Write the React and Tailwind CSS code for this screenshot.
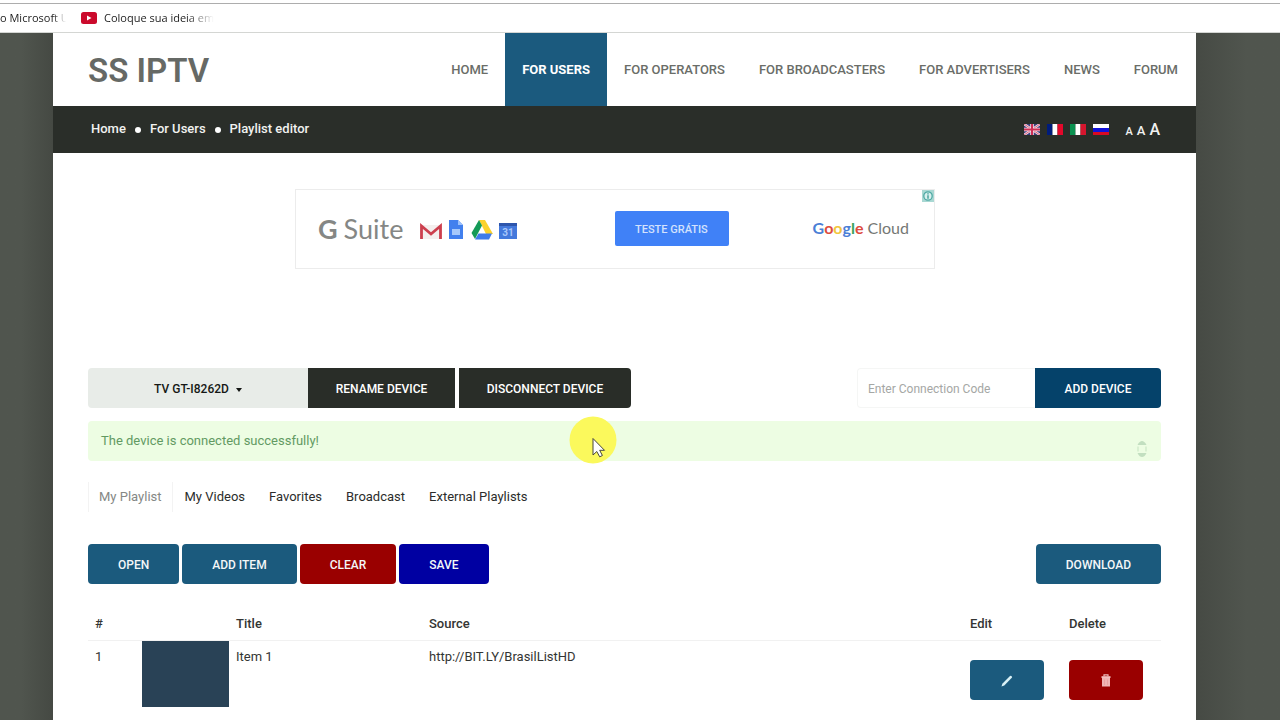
import React from "react";

const navItems = [
  { label: "HOME" },
  { label: "FOR USERS", active: true },
  { label: "FOR OPERATORS" },
  { label: "FOR BROADCASTERS" },
  { label: "FOR ADVERTISERS" },
  { label: "NEWS" },
  { label: "FORUM" },
];

const tabs = ["My Playlist", "My Videos", "Favorites", "Broadcast", "External Playlists"];

const items = [{ id: 1, title: "Item 1", source: "http://BIT.LY/BrasilListHD" }];

function BookmarksBar() {
  return (
    <div className="flex h-[33px] shrink-0 flex-col border-b border-[#d4d6d3] bg-white pt-[3px]">
      <div className="flex flex-1 items-center border-t border-[#adadad] font-['Open_Sans','Noto_Sans',sans-serif] text-[11px] whitespace-nowrap">
        <a href="#microsoft" className="w-[66px] bg-linear-to-r from-[#1c1c1c] from-80% to-transparent bg-clip-text text-transparent">
          o Microsoft U
        </a>
        <a href="#video" className="ml-[15px] flex items-center gap-[7px]">
          <svg viewBox="0 0 16 12" className="h-3 w-4" aria-hidden="true">
            <rect width="16" height="12" rx="2.5" fill="#cb0a2c" />
            <path d="M6 3.500v5l4.500-2.500z" fill="#fff" />
          </svg>
          <span className="bg-linear-to-r from-[#1c1c1c] from-75% to-transparent bg-clip-text text-transparent">
            Coloque sua ideia em
          </span>
        </a>
      </div>
    </div>
  );
}

function Header() {
  return (
    <header className="flex h-[73px] items-stretch justify-between">
      <a href="#top" className="flex items-center pt-[2px] pl-[35px] text-[33px] font-semibold text-[#666965]">
        SS IPTV
      </a>
      <nav className="flex pr-[1px] text-[13px] font-medium">
        {navItems.map((item) => (
          <a
            key={item.label}
            href="#nav"
            className={
              item.active
                ? "flex items-center bg-[#1b5a7e] px-[17px] font-bold text-white"
                : "flex items-center px-[17px] text-[#6a6d68]"
            }
          >
            {item.label}
          </a>
        ))}
      </nav>
    </header>
  );
}

function Flag({ name, children }) {
  return (
    <a href="#lang" aria-label={name}>
      <svg viewBox="0 0 16 11" className="h-[11px] w-4">
        {children}
      </svg>
    </a>
  );
}

function Breadcrumbs() {
  return (
    <div className="flex h-[47px] items-center justify-between bg-[#2a2e29] pr-9 pl-[38px] text-[13px] font-medium text-[#f1f2f0]">
      <nav aria-label="Breadcrumb" className="flex items-center gap-[9px] pb-[2px]">
        <a href="#home">Home</a>
        <span className="mt-[2px] size-[6px] rounded-full bg-white" />
        <a href="#users">For Users</a>
        <span className="mt-[2px] size-[6px] rounded-full bg-white" />
        <a href="#editor">Playlist editor</a>
      </nav>
      <div className="flex items-center">
        <div className="flex items-center gap-[7px]">
          <Flag name="English">
            <rect width="16" height="11" fill="#3c3f7c" />
            <path d="M0 0l16 11M16 0L0 11" stroke="#f3dbe4" strokeWidth="2.400" />
            <path d="M0 0l16 11M16 0L0 11" stroke="#d0415f" strokeWidth="0.800" />
            <path d="M8 0v11M0 5.500h16" stroke="#f3dbe4" strokeWidth="3.600" />
            <path d="M8 0v11M0 5.500h16" stroke="#cf2f55" strokeWidth="2" />
          </Flag>
          <Flag name="Français">
            <rect width="5.500" height="11" fill="#001c7c" />
            <rect x="5.500" width="5" height="11" fill="#fff" />
            <rect x="10.500" width="5.500" height="11" fill="#e5082b" />
          </Flag>
          <Flag name="Italiano">
            <rect width="5.500" height="11" fill="#0b9150" />
            <rect x="5.500" width="5" height="11" fill="#fff" />
            <rect x="10.500" width="5.500" height="11" fill="#d6162e" />
          </Flag>
          <Flag name="Русский">
            <rect width="16" height="4" fill="#fff" />
            <rect y="4" width="16" height="4" fill="#1010d8" />
            <rect y="8" width="16" height="3" fill="#d80a22" />
          </Flag>
        </div>
        <div className="ml-4 flex items-baseline gap-1">
          <button type="button" aria-label="Small text" className="text-[11px]">A</button>
          <button type="button" aria-label="Medium text" className="text-[13px]">A</button>
          <button type="button" aria-label="Large text" className="text-base">A</button>
        </div>
      </div>
    </div>
  );
}

function SuiteIcons() {
  return (
    <svg viewBox="0 0 98 22" className="h-[22px] w-[98px]" aria-hidden="true">
      <rect x="1" y="6" width="20" height="14" fill="#f4efee" />
      <path d="M1.500 20V7l9.500 8 9.500-8v13" fill="none" stroke="#cc3f4e" strokeWidth="2.800" />
      <path d="M29 1h9l5 5v14H29z" fill="#4280ee" />
      <path d="M38 1l5 5h-5z" fill="#9bc0fa" />
      <rect x="32" y="10" width="8" height="6" fill="#a6c8fb" />
      <path d="M59 1h6l8 14h-7z" fill="#fbd22c" />
      <path d="M59 1l3 5.500L55 20l-3.500-6z" fill="#149a57" />
      <path d="M58.500 14.500H72L69 20.500H55z" fill="#3e7bea" />
      <path d="M79 4h18v16H79z" fill="#4479dc" />
      <path d="M79 4h18v3H79z" fill="#2e56ac" />
      <text x="88" y="17" textAnchor="middle" fontSize="10" fontWeight="700" fill="#a9c7fa" fontFamily="Roboto">31</text>
    </svg>
  );
}

function AdBanner() {
  return (
    <aside className="relative mt-9 ml-[242px] flex h-20 w-[640px] items-center border border-[#ececec] bg-white font-['Lato',sans-serif]">
      <div className="ml-[22px] flex items-center text-[27px] text-[#858785]">
        <span className="font-bold">G</span>
        <span className="ml-[6px]">Suite</span>
      </div>
      <div className="mt-[2px] ml-[17px]">
        <SuiteIcons />
      </div>
      <a
        href="#trial"
        className="absolute top-[21px] left-[319px] flex h-[35px] w-[114px] items-center rounded-xs bg-[#4081f7] pt-[2px] pl-5 font-['Roboto',sans-serif] text-[11px] font-medium text-[#d3e2fd]"
      >
        TESTE GRÁTIS
      </a>
      <div className="mr-[25px] mb-[3px] ml-auto text-base whitespace-nowrap text-[#757875]">
        <span className="font-bold">
          <span className="text-[#4b7fd6]">G</span>
          <span className="text-[#dd4b40]">o</span>
          <span className="text-[#f2c63c]">o</span>
          <span className="text-[#4b7fd6]">g</span>
          <span className="text-[#3ba55c]">l</span>
          <span className="text-[#dd4b40]">e</span>
        </span>{" "}
        Cloud
      </div>
      <svg viewBox="0 0 12 12" className="absolute top-0 right-0 size-3" aria-hidden="true">
        <rect width="12" height="12" fill="#a9d8d3" />
        <circle cx="6" cy="6" r="4.200" fill="#d9f0ee" stroke="#4fa9a4" strokeWidth="1.300" />
        <path d="M6 3.200v1.200M6 5.200v3.600" stroke="#3f9d98" strokeWidth="1.400" />
      </svg>
    </aside>
  );
}

function DeviceBar() {
  return (
    <div className="mt-[98px] flex items-center text-xs font-medium">
      <button type="button" className="flex h-10 w-[220px] items-center justify-center gap-[7px] rounded-l-[4px] bg-[#e8ece8] pt-[2px] text-[#151815]">
        TV GT-I8262D
        <svg viewBox="0 0 6 4" className="mt-[2px] h-1 w-[6px]" aria-hidden="true">
          <path d="M0 0h6L3 4z" fill="#151715" />
        </svg>
      </button>
      <button type="button" className="h-10 w-[147px] bg-[#292d28] pt-[2px] text-white">RENAME DEVICE</button>
      <button type="button" className="ml-1 h-10 w-[172px] rounded-r-[4px] bg-[#292d28] pt-[2px] text-white">DISCONNECT DEVICE</button>
      <form className="ml-auto flex items-center" onSubmit={(e) => e.preventDefault()}>
        <input
          type="text"
          aria-label="Connection code"
          placeholder="Enter Connection Code"
          className="h-10 w-[178px] rounded-l-[4px] border border-r-0 border-[#f5f6f5] px-[10px] pt-[2px] text-xs font-normal outline-none placeholder:text-[#a5a7a5]"
        />
        <button type="submit" className="mt-[1px] h-10 w-[126px] rounded-r-[4px] bg-[#05426a] pt-[2px] text-white">ADD DEVICE</button>
      </form>
    </div>
  );
}

function Alert() {
  return (
    <div role="status" className="relative mt-[13px] flex h-10 items-center justify-between rounded-[4px] bg-[#edfde3] pr-[13px] pl-[13px] text-[13px] text-[#629a62]">
      <span className="pb-[1px]">The device is connected successfully!</span>
      <button type="button" aria-label="Dismiss" className="mt-4">
        <svg viewBox="0 0 12 18" className="h-[18px] w-3">
          <path d="M1.500 5C3 2 4.500 1 6 1s3 1 4.500 4zM1.500 13c1.500 3 3 4 4.500 4s3-1 4.500-4z" fill="#c2dfc0" />
          <path d="M2 6.500v5M10 6.500v5" stroke="#d2ebcd" strokeWidth="1.500" />
        </svg>
      </button>
      <svg viewBox="0 0 48 48" className="absolute -top-[5px] left-[481px] size-12" aria-hidden="true">
        <circle cx="24" cy="24" r="23.500" fill="#fbf95c" />
        <path d="M24 22.500v16.500l3.800-3.500 2.900 5.300 2.700-1.300-2.700-5.200h4.800z" fill="#fff" stroke="#45453a" strokeWidth="1" />
      </svg>
    </div>
  );
}

function Tabs() {
  return (
    <div role="tablist" className="mt-[21px] flex h-[30px] text-[13px] text-[#2b2d2b]">
      {tabs.map((tab, index) => (
        <button
          key={tab}
          type="button"
          role="tab"
          aria-selected={index === 0}
          className={
            index === 0
              ? "border-x border-[#f3f3f3] px-[10px] text-[#858885]"
              : "px-3"
          }
        >
          {tab}
        </button>
      ))}
    </div>
  );
}

function Actions() {
  return (
    <div className="mt-8 flex gap-[3px] text-xs font-medium text-[#f4f7f8]">
      <button type="button" className="h-10 rounded-[4px] bg-[#1b5a7d] px-[30px] pt-[2px]">OPEN</button>
      <button type="button" className="h-10 rounded-[4px] bg-[#1b5a7d] px-[30px] pt-[2px]">ADD ITEM</button>
      <button type="button" className="h-10 rounded-[4px] bg-[#9a0000] px-[30px] pt-[2px]">CLEAR</button>
      <button type="button" className="h-10 rounded-[4px] bg-[#0000a2] px-[30px] pt-[2px]">SAVE</button>
      <button type="button" className="ml-auto h-10 rounded-[4px] bg-[#1b5a7d] px-[30px] pt-[2px]">DOWNLOAD</button>
    </div>
  );
}

function Playlist() {
  return (
    <table className="mt-[22px] w-full table-fixed text-left text-[13px] text-[#333533]">
      <thead>
        <tr className="h-[34px] border-b border-[#f1f1f1]">
          <th className="w-[54px] px-[7px] pt-[2px] font-medium">#</th>
          <th className="w-[87px]" aria-label="Color" />
          <th className="w-[193px] px-[7px] pt-[2px] font-medium">Title</th>
          <th className="px-[7px] pt-[2px] font-medium">Source</th>
          <th className="w-[99px] px-[7px] pt-[2px] font-medium">Edit</th>
          <th className="w-[99px] px-[7px] pt-[2px] font-medium">Delete</th>
        </tr>
      </thead>
      <tbody>
        {items.map((item) => (
          <tr key={item.id} className="align-top">
            <td className="px-[7px] pt-[6px]">{item.id}</td>
            <td>
              <div className="h-[66px] bg-[#294256]" />
            </td>
            <td className="px-[7px] pt-[6px]">{item.title}</td>
            <td className="px-[7px] pt-[6px]">{item.source}</td>
            <td className="px-[7px] pt-[19px]">
              <button type="button" aria-label="Edit item" className="flex h-10 w-[74px] items-center justify-center rounded-[4px] bg-[#1b5a7d]">
                <svg viewBox="0 0 12 12" className="mt-[2px] size-3">
                  <path d="M0.500 11.500l.8-2.800L9 1q.7-.6 1.400 0l.4.400q.6.700 0 1.400L3.300 10.600z" fill="#d9f1f6" />
                </svg>
              </button>
            </td>
            <td className="px-[7px] pt-[19px]">
              <button type="button" aria-label="Delete item" className="flex h-10 w-[74px] items-center justify-center rounded-[4px] bg-[#9a0000]">
                <svg viewBox="0 0 10 13" className="mt-[2px] h-[13px] w-[10px]">
                  <path d="M3 2.200V.8h4v1.400" fill="none" stroke="#f0baba" strokeWidth="1.200" />
                  <path d="M.5 2.200h9v1.800h-9z" fill="#f3c4c4" />
                  <path d="M1 3.800h8V12.500H1z" fill="#f0b4b4" />
                  <path d="M3.500 5.500v5.500M6.500 5.500v5.500" stroke="#e69a9a" strokeWidth="0.700" />
                </svg>
              </button>
            </td>
          </tr>
        ))}
      </tbody>
    </table>
  );
}

export default function App() {
  return (
    <div className="flex min-h-screen flex-col bg-[#50554e] font-['Roboto',sans-serif] leading-5">
      <BookmarksBar />
      <div className="flex flex-1">
        <div className="w-[53px] shrink-0 bg-linear-to-r from-[#50554e] from-40% to-[#454943]" />
        <main className="min-w-0 flex-1 bg-white">
          <Header />
          <Breadcrumbs />
          <AdBanner />
          <div className="px-[35px] pb-3">
            <DeviceBar />
            <Alert />
            <Tabs />
            <Actions />
            <Playlist />
          </div>
        </main>
        <div className="w-[84px] shrink-0 bg-linear-to-r from-[#464a44] to-[#50554e] to-60%" />
      </div>
    </div>
  );
}
